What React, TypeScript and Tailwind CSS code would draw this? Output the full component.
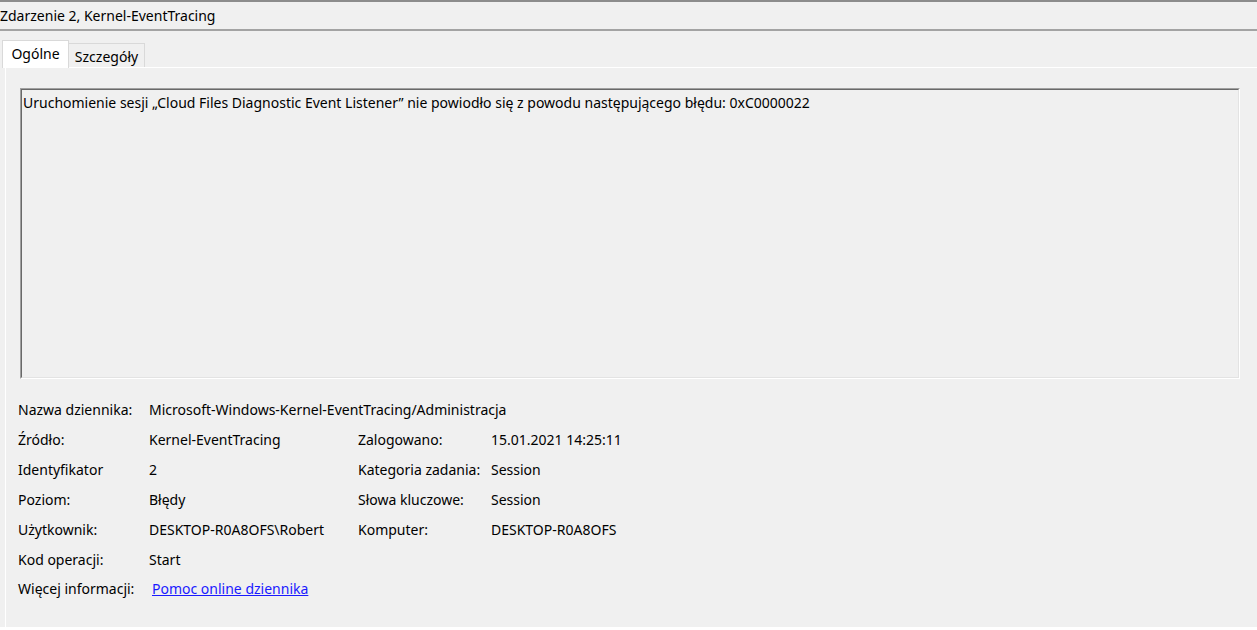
export default function App() {
  const left = [
    ["Źródło:", "Kernel-EventTracing"],
    ["Identyfikator", "2"],
    ["Poziom:", "Błędy"],
    ["Użytkownik:", "DESKTOP-R0A8OFS\\Robert"],
    ["Kod operacji:", "Start"],
  ];
  const right = [
    ["Zalogowano:", "15.01.2021 14:25:11"],
    ["Kategoria zadania:", "Session"],
    ["Słowa kluczowe:", "Session"],
    ["Komputer:", "DESKTOP-R0A8OFS"],
  ];

  return (
    <div className="w-[1257px] h-[630px] bg-white overflow-hidden text-[14px] leading-[19px] text-black font-['Segoe_UI','Noto_Sans',sans-serif]">
      {/* title */}
      <div className="h-[31px] bg-[#f0f0f0] border-t-[2px] border-t-[#8c8c8c] border-b-[2px] border-b-[#a3a3a3] flex items-center">
        <span className="text-[14px] leading-none">Zdarzenie 2, Kernel-EventTracing</span>
      </div>

      <div className="h-[596px] bg-[#f0f0f0] pt-[9px]">
        {/* tabs */}
        <div className="flex items-end h-[27px] pl-[2px]">
          <div className="h-[28px] w-[67px] bg-white border border-[#d9d9d9] border-b-0 flex items-start pt-[3px] justify-center relative z-10 -mb-[1px]">
            Ogólne
          </div>
          <div className="h-[24px] w-[76px] bg-[#f0f0f0] border border-[#d9d9d9] border-l-0 border-b-0 flex items-center justify-center pt-[1px]">
            Szczegóły
          </div>
        </div>

        {/* panel */}
        <div className="ml-[5px] h-[560px] border-t border-l border-white bg-[#f0f0f0] pl-[14px] pt-[20px] pr-[17px]">
          <div className="h-[291px] border-t border-l border-t-[#a0a0a0] border-l-[#a0a0a0] border-b border-r border-b-white border-r-white">
            <div className="h-full border-t border-l border-t-[#696969] border-l-[#696969] border-b border-r border-b-[#e3e3e3] border-r-[#e3e3e3] px-[1px] pt-[3px]">
              Uruchomienie sesji „Cloud Files Diagnostic Event Listener” nie powiodło się z powodu następującego błędu: 0xC0000022
            </div>
          </div>

          <div className="mt-[15px] -ml-[2px]">
            <div className="flex h-[30px] items-center">
              <span className="w-[131px]">Nazwa dziennika:</span>
              <span>Microsoft-Windows-Kernel-EventTracing/Administracja</span>
            </div>
            {left.map(([k, v], i) => (
              <div key={k} className="flex h-[30px] items-center">
                <span className="w-[131px]">{k}</span>
                <span className="w-[209px]">{v}</span>
                {right[i] && (
                  <>
                    <span className="w-[133px]">{right[i][0]}</span>
                    <span>{right[i][1]}</span>
                  </>
                )}
              </div>
            ))}
            <div className="flex h-[30px] items-center -mt-[1px]">
              <span className="w-[134px]">Więcej informacji:</span>
              <a href="#" className="text-[#1a1aff] underline">Pomoc online dziennika</a>
            </div>
          </div>
        </div>
        <div className="h-[3px] bg-white" />
      </div>
    </div>
  );
}
